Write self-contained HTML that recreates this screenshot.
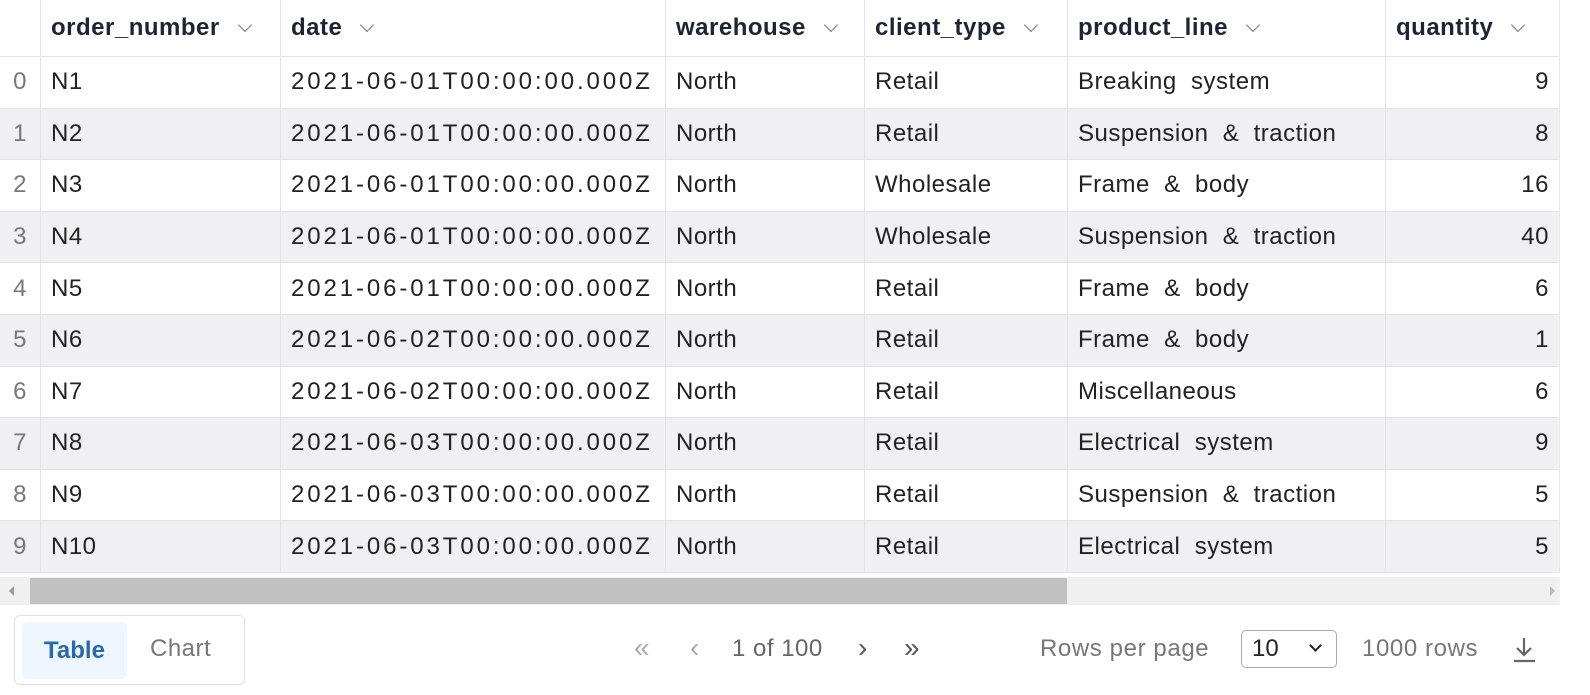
<!DOCTYPE html><html><head><meta charset="utf-8"><style>
*{margin:0;padding:0;box-sizing:border-box}
body{width:1590px;height:695px;background:#fff;font-family:"Liberation Sans",sans-serif;color:#222;position:relative;overflow:hidden}
.row{position:absolute;left:0;width:1560px;height:52px;border-bottom:1px solid #e4e4e8}
.c{position:absolute;top:0;height:100%;display:flex;align-items:center;font-size:24px;border-right:1px solid #e4e4e8;white-space:nowrap;overflow:hidden;letter-spacing:0.5px}
.h .c{font-weight:bold;color:#1d2433}
.chev{display:inline-block;width:10px;height:10px;border-right:1.6px solid #777;border-bottom:1.6px solid #777;transform:rotate(45deg);margin-left:20px;margin-top:-6px}
.alt{background:#f0f0f2}
.i{color:#777;justify-content:center}
.num{justify-content:flex-end;padding-right:10px}
</style></head><body>
<div id="t"></div>
<script>
const cols=[[0,41],[41,281],[281,666],[666,865],[865,1068],[1068,1386],[1386,1560]];
const hdr=["","order_number","date","warehouse","client_type","product_line","quantity"];
const data=[["N1","2021-06-01","Retail","Breaking  system",9],["N2","2021-06-01","Retail","Suspension  &  traction",8],["N3","2021-06-01","Wholesale","Frame  &  body",16],["N4","2021-06-01","Wholesale","Suspension  &  traction",40],["N5","2021-06-01","Retail","Frame  &  body",6],["N6","2021-06-02","Retail","Frame  &  body",1],["N7","2021-06-02","Retail","Miscellaneous",6],["N8","2021-06-03","Retail","Electrical  system",9],["N9","2021-06-03","Retail","Suspension  &  traction",5],["N10","2021-06-03","Retail","Electrical  system",5]];
let h='<div class="row h" style="top:0;height:57px">';
hdr.forEach((t,k)=>{h+=`<div class="c" style="left:${cols[k][0]}px;width:${cols[k][1]-cols[k][0]}px;padding-left:10px">${t}${t?'<span class="chev"></span>':''}</div>`});
h+='</div>';
data.forEach((d,r)=>{
 const top=57+r*51.6;
 const vals=[r,d[0],d[1]+"T00:00:00.000Z","North",d[2],d[3].replace(/ /g,"&nbsp;"),d[4]];
 h+=`<div class="row ${r%2?'alt':''}" style="top:${top}px;height:51.6px">`;
 vals.forEach((v,k)=>{let cl=k==0?'i':k==6?'num':'';h+=`<div class="c ${cl}" style="left:${cols[k][0]}px;width:${cols[k][1]-cols[k][0]}px;${k&&k<6?'padding-left:10px;':''}${k==2?'letter-spacing:2.9px;':''}">${v}</div>`});
 h+='</div>';
});
document.getElementById('t').innerHTML=h;
</script>
<div style="position:absolute;left:0;top:577px;width:1560px;height:28px;background:#f0f0f0"></div>
<div style="position:absolute;left:30px;top:578px;width:1037px;height:26px;background:#c1c1c1"></div>
<div style="position:absolute;left:9px;top:586px;width:0;height:0;border-top:5px solid transparent;border-bottom:5px solid transparent;border-right:5px solid #999"></div>
<div style="position:absolute;left:1550px;top:586px;width:0;height:0;border-top:5px solid transparent;border-bottom:5px solid transparent;border-left:5px solid #bbb"></div>
<div style="position:absolute;left:1555px;top:0;width:35px;height:610px;background:linear-gradient(90deg,rgba(255,255,255,0),#fff)"></div>
<div style="position:absolute;left:14px;top:615px;width:231px;height:70px;border:1px solid #e2e2e6;border-radius:6px"></div>
<div style="position:absolute;left:22px;top:622px;width:105px;height:57px;background:#eef6ff;border-radius:6px;color:#2d6aa3;font-weight:bold;font-size:24px;display:flex;align-items:center;justify-content:center">Table</div>
<div style="position:absolute;left:150px;top:635px;font-size:24px;color:#777;letter-spacing:0.5px">Chart</div>
<div style="position:absolute;left:634px;top:632px;font-size:28px;color:#aaa">«</div>
<div style="position:absolute;left:690px;top:632px;font-size:28px;color:#aaa">‹</div>
<div style="position:absolute;left:732px;top:635px;font-size:24px;color:#666;letter-spacing:0.5px">1 of 100</div>
<div style="position:absolute;left:858px;top:632px;font-size:28px;color:#555">›</div>
<div style="position:absolute;left:904px;top:632px;font-size:28px;color:#555">»</div>
<div style="position:absolute;left:1040px;top:635px;font-size:24px;color:#777;letter-spacing:0.6px">Rows per page</div>
<div style="position:absolute;left:1241px;top:630px;width:96px;height:38px;border:1px solid #aaa;border-radius:5px;font-size:24px;padding:4px 0 0 10px;color:#222">10<span style="position:absolute;right:16px;top:10px;width:9px;height:9px;border-right:2.5px solid #222;border-bottom:2.5px solid #222;transform:rotate(45deg)"></span></div>
<div style="position:absolute;left:1362px;top:635px;font-size:24px;color:#777;letter-spacing:0.6px">1000 rows</div>
<svg style="position:absolute;left:1510px;top:636px" width="30" height="30" viewBox="0 0 30 30"><path d="M14 2v17M7 12l7 7 7-7M4 25h21" stroke="#666" stroke-width="2.2" fill="none"/></svg>
</body></html>
